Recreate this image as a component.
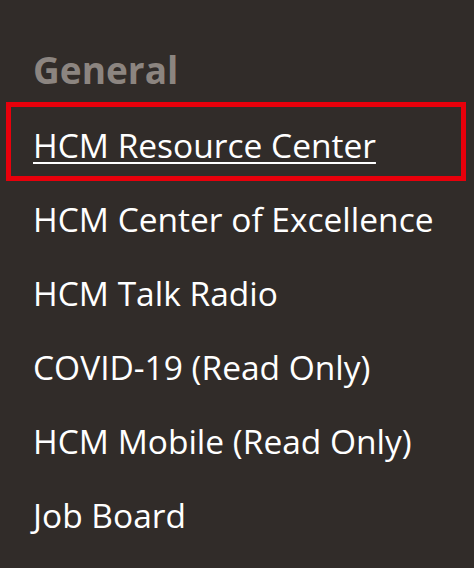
const links = [
  "HCM Resource Center",
  "HCM Center of Excellence",
  "HCM Talk Radio",
  "COVID-19 (Read Only)",
  "HCM Mobile (Read Only)",
  "Job Board",
]

export default function App() {
  const [current, ...rest] = links
  return (
    <div
      className="w-[474px] h-[568px] bg-[#312c29] overflow-hidden pt-[46px]"
      style={{ fontFamily: '"Open Sans", "Noto Sans", sans-serif' }}
    >
      <h2 className="pl-[33px] text-[37px] font-bold leading-[48px] text-[#8c8580]">General</h2>
      <nav className="mt-[8px]">
        {/* highlighted entry */}
        <div className="mx-[6px] w-[460px] h-[79px] border-[5px] border-[#e8000b] pt-[1px] pl-[22px]">
          <a href="#" className="block text-[33.5px] font-medium leading-[74px] text-white underline underline-offset-[4px] decoration-2">
            {current}
          </a>
        </div>
        <ul className="pt-[1px]">
          {rest.map((label) => (
            <li key={label} className="h-[74px] pl-[33px]">
              <a href="#" className="block text-[33.5px] font-medium leading-[74px] text-white">
                {label}
              </a>
            </li>
          ))}
        </ul>
      </nav>
    </div>
  )
}
